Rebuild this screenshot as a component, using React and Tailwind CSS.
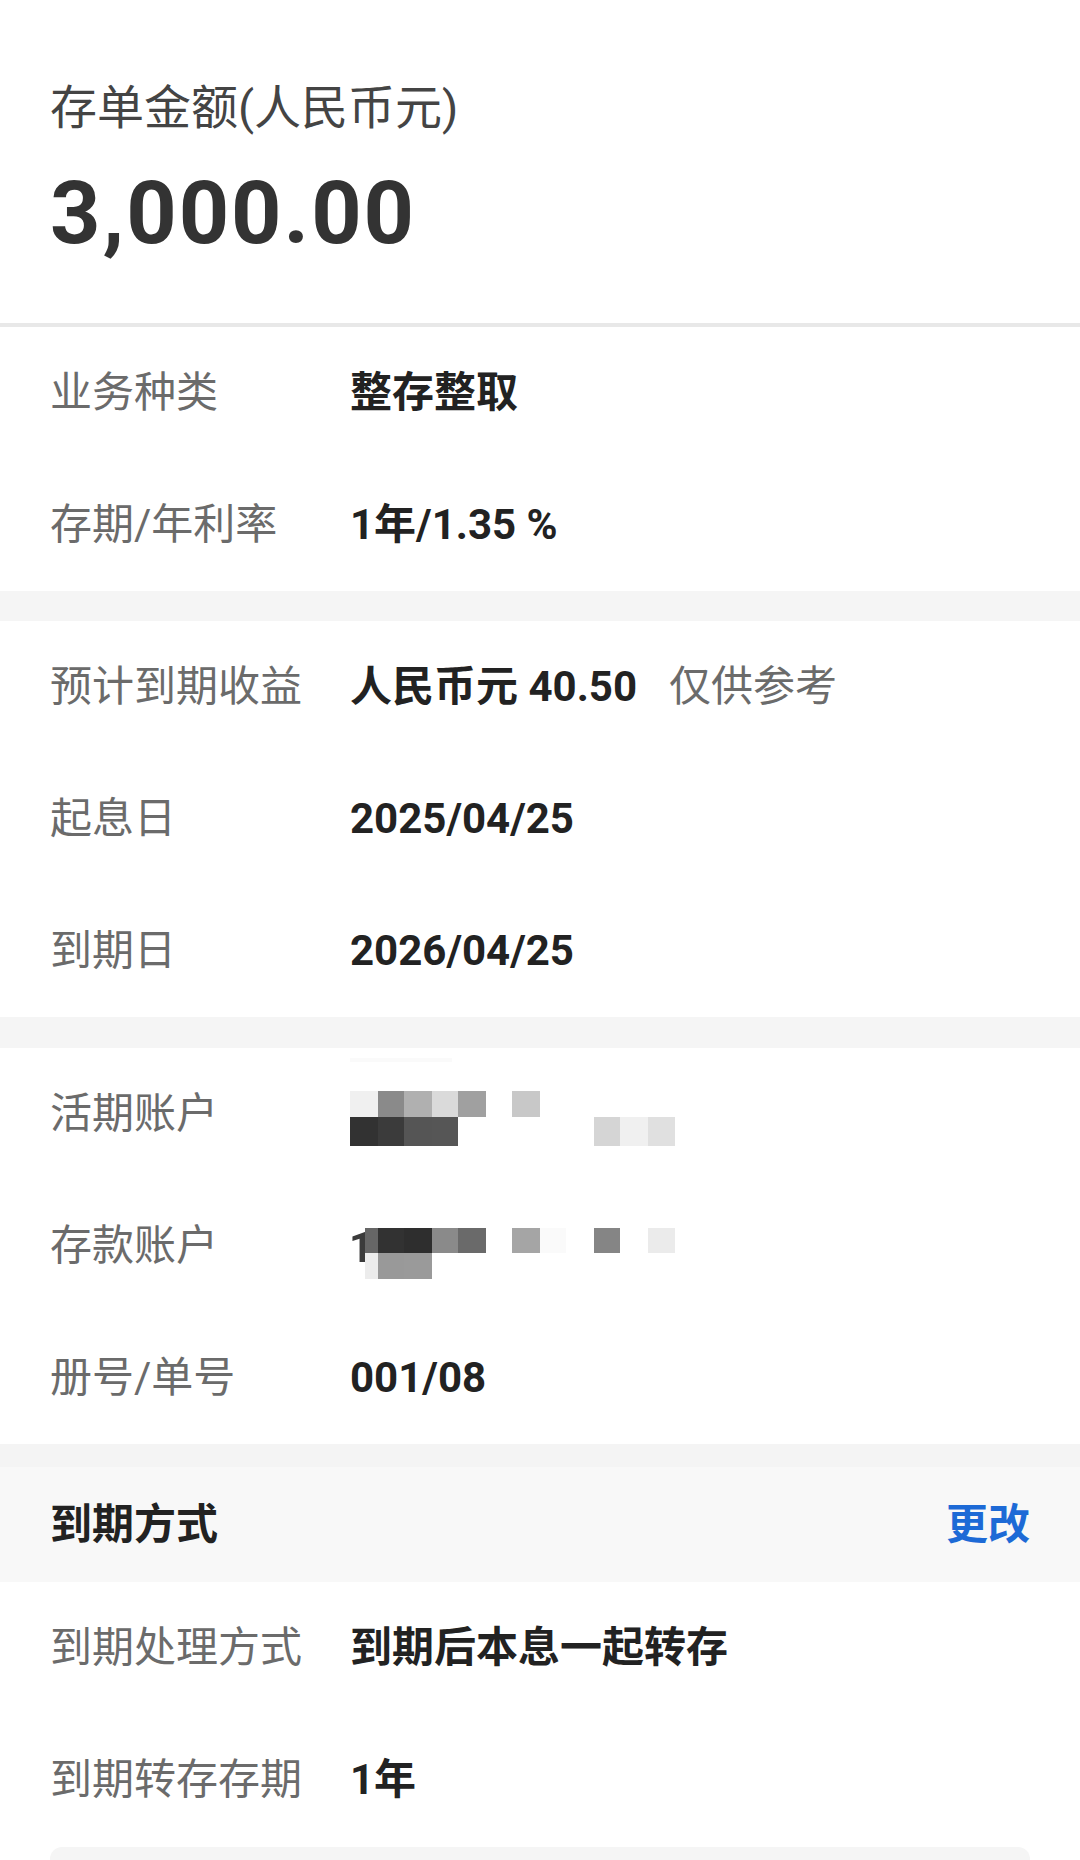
import React from 'react';

const font = { fontFamily: 'Roboto, "Noto Sans CJK SC", sans-serif' };

function Row({ label, children }) {
  return (
    <div className="flex h-[132px] items-center px-[50px]">
      <div className="w-[300px] shrink-0 text-[42px] leading-none text-[#6b6b6b]">{label}</div>
      <div className="flex items-center text-[42px] font-bold leading-none text-[#222]">{children}</div>
    </div>
  );
}

function Band({ h }) {
  return <div className={`${h} bg-[#f5f5f5]`} />;
}

// pixelated (masked) account numbers
function Mosaic({ cells, lead }) {
  return (
    <svg width="340" height="132" viewBox="0 0 340 132" className="block">
      <defs>
        <filter id="soft" x="-10%" y="-10%" width="120%" height="120%">
          <feGaussianBlur stdDeviation="0.7" />
        </filter>
      </defs>
      <g filter="url(#soft)">
        {lead && (
          <text x="-1" y="82" fontSize="42" fontWeight="700" fill="#3a3a3a" fontFamily="Roboto, sans-serif">
            1
          </text>
        )}
        {cells.map(([x, y, w, h, c], i) => (
          <rect key={i} x={x} y={y} width={w} height={h} fill={c} />
        ))}
      </g>
    </svg>
  );
}

const acct1 = [
  [-8, 10, 110, 4, '#fafafa'],
  [0, 43, 28, 26, '#f0f0f0'],
  [28, 43, 26, 26, '#8a8a8a'],
  [54, 43, 28, 26, '#b0b0b0'],
  [82, 43, 26, 26, '#dadada'],
  [108, 43, 28, 26, '#a0a0a0'],
  [162, 43, 28, 26, '#c8c8c8'],
  [0, 69, 28, 29, '#333333'],
  [28, 69, 26, 29, '#3a3a3a'],
  [54, 69, 28, 29, '#555555'],
  [82, 69, 26, 29, '#575757'],
  [244, 69, 26, 29, '#d5d5d5'],
  [270, 69, 28, 29, '#f0f0f0'],
  [298, 69, 27, 29, '#e0e0e0'],
];

const acct2 = [
  [15, 48, 13, 25, '#666666'],
  [28, 48, 26, 25, '#333333'],
  [54, 48, 28, 25, '#2e2e2e'],
  [82, 48, 26, 25, '#8a8a8a'],
  [108, 48, 28, 25, '#6a6a6a'],
  [162, 48, 28, 25, '#a5a5a5'],
  [190, 48, 26, 25, '#fafafa'],
  [244, 48, 26, 25, '#858585'],
  [298, 48, 27, 25, '#ebebeb'],
  [15, 73, 13, 26, '#ececec'],
  [28, 73, 26, 26, '#999999'],
  [54, 73, 28, 26, '#9a9a9a'],
];

export default function App() {
  return (
    <div className="min-h-[1860px] w-[1080px] overflow-hidden bg-white" style={font}>
      <div className="h-[327px] border-b-[4px] border-[#e8e8e8] px-[50px] pt-[80px]">
        <div className="text-[47px] leading-[56px] text-[#444]">存单金额(人民币元)</div>
        <div className="mt-[33px] text-[88px] font-bold leading-[88px] tracking-[2px] text-[#333]">3,000.00</div>
      </div>

      <Row label="业务种类">整存整取</Row>
      <Row label="存期/年利率">1年/1.35 %</Row>

      <Band h="h-[30px]" />

      <Row label="预计到期收益">
        <span>人民币元 40.50</span>
        <span className="ml-[32px] font-normal text-[#6b6b6b]">仅供参考</span>
      </Row>
      <Row label="起息日">2025/04/25</Row>
      <Row label="到期日">2026/04/25</Row>

      <Band h="h-[31px]" />

      <div className="flex h-[132px] items-center px-[50px]">
        <div className="w-[300px] shrink-0 text-[42px] leading-none text-[#6b6b6b]">活期账户</div>
        <Mosaic cells={acct1} />
      </div>
      <div className="flex h-[132px] items-center px-[50px]">
        <div className="w-[300px] shrink-0 text-[42px] leading-none text-[#6b6b6b]">存款账户</div>
        <Mosaic cells={acct2} lead />
      </div>
      <Row label="册号/单号">001/08</Row>

      <div className="h-[23px] bg-[#f4f4f4]" />
      <div className="flex h-[115px] items-center justify-between bg-[#f8f8f8] px-[50px]">
        <span className="text-[42px] font-bold leading-none text-[#222]">到期方式</span>
        <span className="text-[42px] font-bold leading-none text-[#1d6ad6]">更改</span>
      </div>

      <Row label="到期处理方式">到期后本息一起转存</Row>
      <Row label="到期转存存期">1年</Row>

      <div className="mx-[50px] mt-[1px] h-[100px] rounded-[12px] bg-[#f5f5f5]" />
    </div>
  );
}
